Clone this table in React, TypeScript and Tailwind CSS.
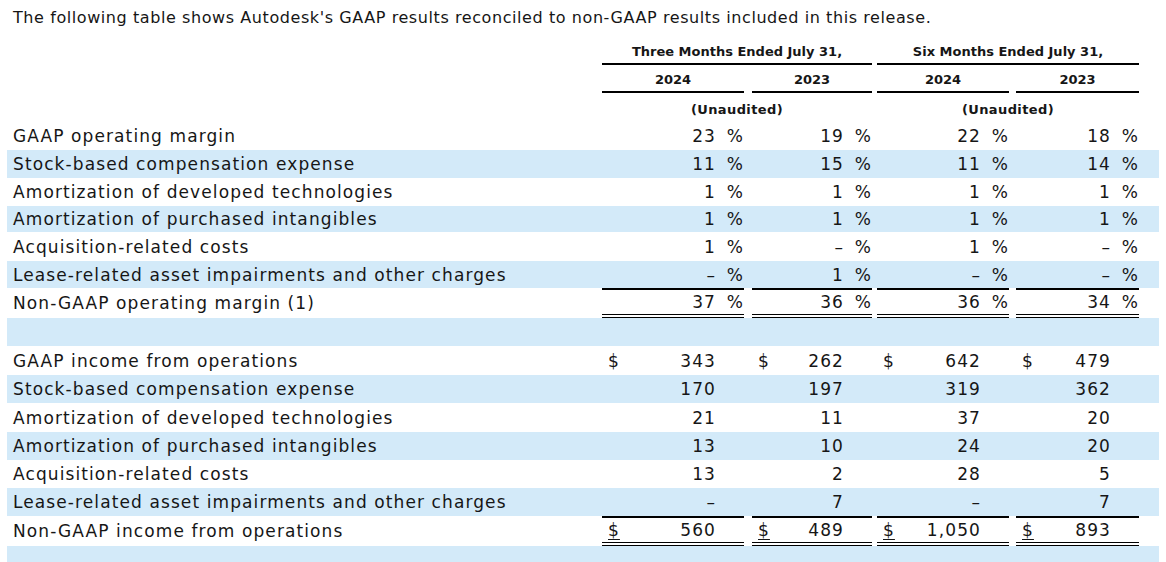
import React from "react";

const GRID = "grid grid-cols-[595px_142px_8px_120px_5px_132px_7px_123px]";

type Row = {
  label: string;
  vals: string[];
  pct?: boolean;
  dollar?: boolean;
  total?: boolean;
  blue?: boolean;
  h: string;
};

const rows: Row[] = [
  { label: "GAAP operating margin", vals: ["23", "19", "22", "18"], pct: true, h: "h-[29px]" },
  { label: "Stock-based compensation expense", vals: ["11", "15", "11", "14"], pct: true, blue: true, h: "h-[28px]" },
  { label: "Amortization of developed technologies", vals: ["1", "1", "1", "1"], pct: true, h: "h-[28px]" },
  { label: "Amortization of purchased intangibles", vals: ["1", "1", "1", "1"], pct: true, blue: true, h: "h-[26px]" },
  { label: "Acquisition-related costs", vals: ["1", "–", "1", "–"], pct: true, h: "h-[29px]" },
  { label: "Lease-related asset impairments and other charges", vals: ["–", "1", "–", "–"], pct: true, blue: true, h: "h-[27px]" },
  { label: "Non-GAAP operating margin (1)", vals: ["37", "36", "36", "34"], pct: true, total: true, h: "h-[30px]" },
  { label: "", vals: ["", "", "", ""], blue: true, h: "h-[28px]" },
  { label: "GAAP income from operations", vals: ["343", "262", "642", "479"], dollar: true, h: "h-[29px]" },
  { label: "Stock-based compensation expense", vals: ["170", "197", "319", "362"], blue: true, h: "h-[28px]" },
  { label: "Amortization of developed technologies", vals: ["21", "11", "37", "20"], h: "h-[29px]" },
  { label: "Amortization of purchased intangibles", vals: ["13", "10", "24", "20"], blue: true, h: "h-[28px]" },
  { label: "Acquisition-related costs", vals: ["13", "2", "28", "5"], h: "h-[28px]" },
  { label: "Lease-related asset impairments and other charges", vals: ["–", "7", "–", "7"], blue: true, h: "h-[28px]" },
  { label: "Non-GAAP income from operations", vals: ["560", "489", "1,050", "893"], dollar: true, total: true, h: "h-[30px]" },
  { label: "", vals: ["", "", "", ""], blue: true, h: "h-[28px]" },
];

function ValueCell({ v, row }: { v: string; row: Row }) {
  const inner = (
    <div className="flex items-center h-full">
      <span className={"pl-[6px] " + (row.total ? "underline underline-offset-[3px]" : "")}>
        {row.dollar ? "$" : ""}
      </span>
      <span className="flex-1 text-right">{v}</span>
      <span className="w-[28px] text-right">{row.pct && v !== "" ? "%" : ""}</span>
    </div>
  );
  if (!row.total) return <div className="h-full">{inner}</div>;
  return (
    <div className="h-full border-t-2 border-black flex flex-col">
      <div className="flex-1 border-b-4 border-double border-black">{inner}</div>
    </div>
  );
}

function BodyRow({ row }: { row: Row }) {
  return (
    <div className={`${GRID} ${row.h} ${row.blue ? "bg-[#d3eaf9]" : ""}`}>
      <div className="flex items-center pl-[6px] whitespace-nowrap">{row.label}</div>
      <ValueCell v={row.vals[0]} row={row} />
      <div />
      <ValueCell v={row.vals[1]} row={row} />
      <div />
      <ValueCell v={row.vals[2]} row={row} />
      <div />
      <ValueCell v={row.vals[3]} row={row} />
    </div>
  );
}

export default function App() {
  return (
    <div className="bg-white text-[#161616] px-[7px] font-['DejaVu_Sans',sans-serif] w-[1166px] h-[562px] overflow-hidden">
      <div className="h-[36px] flex items-center pl-[6px] text-[16px] tracking-[0.58px]">
        The following table shows Autodesk's GAAP results reconciled to non-GAAP results included in this release.
      </div>

      <div className="font-bold text-[13px]">
        <div className={`${GRID} h-[29px]`}>
          <div />
          <div className="col-span-3 border-b-2 border-black flex items-end justify-center pb-[1px] leading-[20px]">
            Three Months Ended July 31,
          </div>
          <div />
          <div className="col-span-3 border-b-2 border-black flex items-end justify-center pb-[1px] leading-[20px]">
            Six Months Ended July 31,
          </div>
        </div>
        <div className={`${GRID} h-[28px]`}>
          <div />
          <div className="border-b-2 border-black flex items-end justify-center pb-[1px] leading-[20px]">2024</div>
          <div />
          <div className="border-b-2 border-black flex items-end justify-center pb-[1px] leading-[20px]">2023</div>
          <div />
          <div className="border-b-2 border-black flex items-end justify-center pb-[1px] leading-[20px]">2024</div>
          <div />
          <div className="border-b-2 border-black flex items-end justify-center pb-[1px] leading-[20px]">2023</div>
        </div>
        <div className={`${GRID} h-[28px]`}>
          <div />
          <div className="col-span-3 flex items-end justify-center pb-[1px] leading-[20px] tracking-[0.4px]">(Unaudited)</div>
          <div />
          <div className="col-span-3 flex items-end justify-center pb-[1px] leading-[20px] tracking-[0.4px]">(Unaudited)</div>
        </div>
      </div>

      <div className="text-[17px] tracking-[1.1px] leading-[20px]">
        {rows.map((r, i) => (
          <BodyRow key={i} row={r} />
        ))}
      </div>
    </div>
  );
}
